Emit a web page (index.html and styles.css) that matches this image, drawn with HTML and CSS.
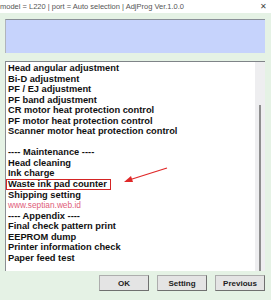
FILE: index.html
```html
<!DOCTYPE html>
<html lang="en">
<head>
    <meta charset="UTF-8">
    <title>AdjProg</title>
    <link rel="stylesheet" href="styles.css">
</head>
<body>
    <div class="window">
        <div class="titlebar">
            <span class="title">model = L220 | port = Auto selection | AdjProg Ver.1.0.0</span>
            <span class="close">&#x2715;</span>
        </div>
        <div class="dialog">
            <div class="status"></div>
            <div class="list">
                <ul class="items">
                    <li>Head angular adjustment</li>
                    <li>Bi-D adjustment</li>
                    <li>PF / EJ adjustment</li>
                    <li>PF band adjustment</li>
                    <li>CR motor heat protection control</li>
                    <li>PF motor heat protection control</li>
                    <li>Scanner motor heat protection control</li>
                    <li>&nbsp;</li>
                    <li>---- Maintenance ----</li>
                    <li>Head cleaning</li>
                    <li>Ink charge</li>
                    <li class="marked">Waste ink pad counter</li>
                    <li>Shipping setting</li>
                    <li class="watermark">www.septian.web.id</li>
                    <li>---- Appendix ----</li>
                    <li>Final check pattern print</li>
                    <li>EEPROM dump</li>
                    <li>Printer information check</li>
                    <li>Paper feed test</li>
                </ul>
                <div class="scrollbar"><div class="thumb"></div></div>
                <!-- red arrow pointing at the marked item -->
                <svg class="arrow" width="50" height="20" viewBox="0 0 50 20">
                    <line x1="46" y1="2" x2="8" y2="14" stroke="#e02828" stroke-width="1.3"/>
                    <polygon points="3,16 10,10 12,16" fill="#e02828"/>
                </svg>
            </div>
            <div class="buttons">
                <button class="btn">OK</button>
                <button class="btn">Setting</button>
                <button class="btn">Previous</button>
            </div>
        </div>
    </div>
</body>
</html>
```

FILE: styles.css
```css
body {
    margin: 0;
    padding: 0;
    font-family: "Liberation Sans", Arial, sans-serif;
}
.window {
    width: 271px;
    height: 300px;
    background-color: #e5f2e5;
    overflow: hidden;
}
.titlebar {
    height: 13px;
    background-color: #ffffff;
    display: flex;
    justify-content: space-between;
    align-items: center;
    padding: 0 4px 0 0;
}
.title {
    font-size: 7.5px;
    color: #555555;
    white-space: nowrap;
}
.close {
    font-size: 8px;
    color: #444444;
}
.dialog {
    padding: 6px 6px 0 5px;
}
.status {
    height: 33px;
    background-color: #c6d3fc;
    border-top: 1px solid #8a8f98;
    border-left: 1px solid #b0b4bb;
}
.list {
    position: relative;
    margin-top: 8px;
    height: 209px;
    background-color: #ffffff;
    border-top: 1px solid #7f8488;
    border-left: 1px solid #8a8e92;
    display: flex;
}
.items {
    flex: 1;
    list-style: none;
    margin: 0;
    padding: 1px 0 0 1px;
    font-size: 9.3px;
    font-weight: bold;
    color: #111111;
}
.items li {
    height: 10.5px;
    line-height: 10.5px;
    white-space: nowrap;
    padding-left: 1px;
}
.items li.marked {
    display: inline-block;
    border: 1px solid #d42424;
    margin-left: -1px;
    padding: 0 3px 0 1px;
    height: 9px;
    line-height: 9px;
    vertical-align: top;
}
.items li.watermark {
    font-weight: normal;
    font-size: 8.3px;
    color: #e0607a;
}
.scrollbar {
    width: 10px;
    background-color: #eeeef0;
    display: flex;
    justify-content: center;
    align-items: flex-end;
}
.thumb {
    width: 2px;
    height: 166px;
    background-color: #8e8e8e;
}
.arrow {
    position: absolute;
    left: 115px;
    top: 104px;
}
.buttons {
    display: flex;
    justify-content: flex-end;
    gap: 8px;
    margin-top: 4px;
}
.btn {
    width: 50px;
    height: 16px;
    padding: 0;
    font-family: "Liberation Sans", Arial, sans-serif;
    font-size: 8px;
    font-weight: bold;
    color: #222222;
    background-color: #e4e4e4;
    border: 1px solid #adadad;
    border-right-color: #707070;
    border-bottom-color: #707070;
}
```
